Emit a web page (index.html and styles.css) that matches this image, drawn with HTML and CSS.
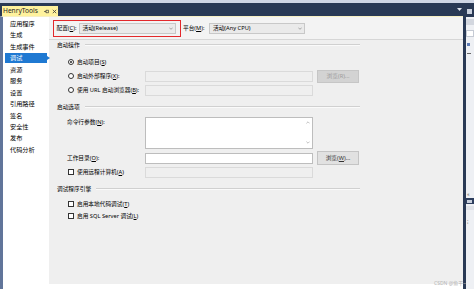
FILE: index.html
```html
<!DOCTYPE html>
<html>
<head>
<meta charset="utf-8">
<title>HenryTools - 调试</title>
<link rel="stylesheet" href="styles.css">
</head>
<body>
<div class="top-strip"></div>
<div class="frame">
  <div class="doc-well">
    <div class="tab-bar">
      <div class="tab">
        <span class="tab-title">HenryTools</span>
        <svg class="tab-pin" width="5" height="5" viewBox="0 0 5 5">
          <path d="M0 2.5H2M2 1V4M2 1.3H4.6V3.7H2" fill="none" stroke="#3b3b3b" stroke-width="0.7"/>
        </svg>
        <svg class="tab-close" width="5" height="5" viewBox="0 0 5 5">
          <path d="M0.8 0.8L4.2 4.2M4.2 0.8L0.8 4.2" stroke="#3b3b3b" stroke-width="0.8"/>
        </svg>
      </div>
      <svg class="tab-menu" width="5" height="3" viewBox="0 0 5 3">
        <path d="M0 0H5L2.5 3Z" fill="#dfe4ee"/>
      </svg>
    </div>
    <div class="doc">
      <ul class="nav">
        <li>应用程序</li>
        <li>生成</li>
        <li>生成事件</li>
        <li class="active">调试</li>
        <li>资源</li>
        <li>服务</li>
        <li>设置</li>
        <li>引用路径</li>
        <li>签名</li>
        <li>安全性</li>
        <li>发布</li>
        <li>代码分析</li>
      </ul>
      <div class="page">
        <div class="config-bar">
          <div class="config-box">
            <span class="config-label">配置(<u>C</u>):</span>
            <div class="combo combo-config">
              <span>活动(Release)</span>
              <svg width="4" height="3" viewBox="0 0 4 3"><path d="M0.3 0.6L2 2.3L3.7 0.6" fill="none" stroke="#777" stroke-width="0.6"/></svg>
            </div>
          </div>
          <span class="platform-label">平台(<u>M</u>):</span>
          <div class="combo combo-platform">
            <span>活动(Any CPU)</span>
            <svg width="4" height="3" viewBox="0 0 4 3"><path d="M0.3 0.6L2 2.3L3.7 0.6" fill="none" stroke="#777" stroke-width="0.6"/></svg>
          </div>
        </div>

        <div class="page-body">
          <section class="group">
            <div class="group-title"><span>启动操作</span></div>
            <div class="row first">
              <div class="lbl"><span class="radio checked"></span>启动项目(<u>S</u>)</div>
            </div>
            <div class="row">
              <div class="lbl"><span class="radio"></span>启动外部程序(<u>X</u>):</div>
              <div class="field disabled"></div>
              <div class="btn disabled">浏览(R)...</div>
            </div>
            <div class="row">
              <div class="lbl"><span class="radio"></span>使用 URL 启动浏览器(<u>B</u>):</div>
              <div class="field disabled"></div>
            </div>
          </section>

          <section class="group">
            <div class="group-title"><span>启动选项</span></div>
            <div class="row text-row first tall">
              <div class="lbl top">命令行参数(<u>N</u>):</div>
              <div class="field textarea">
                <svg width="4" height="3" viewBox="0 0 4 3"><path d="M0.4 2.4L2 0.8L3.6 2.4" fill="none" stroke="#999" stroke-width="0.6"/></svg>
                <svg width="4" height="3" viewBox="0 0 4 3"><path d="M0.4 0.6L2 2.2L3.6 0.6" fill="none" stroke="#999" stroke-width="0.6"/></svg>
              </div>
            </div>
            <div class="row text-row workdir">
              <div class="lbl">工作目录(<u>O</u>):</div>
              <div class="field"></div>
              <div class="btn">浏览(<u>W</u>)...</div>
            </div>
            <div class="row">
              <div class="lbl"><span class="check"></span>使用远程计算机(<u>A</u>)</div>
              <div class="field disabled"></div>
            </div>
          </section>

          <section class="group">
            <div class="group-title"><span>调试程序引擎</span></div>
            <div class="row short first">
              <div class="lbl wide"><span class="check"></span>启用本地代码调试(<u>T</u>)</div>
            </div>
            <div class="row short">
              <div class="lbl wide"><span class="check"></span>启用 SQL Server 调试(<u>L</u>)</div>
            </div>
          </section>
        </div>
      </div>
    </div>
  </div>
  <div class="splitter"></div>
  <div class="tool-panel">
    <div class="tp-head"><span class="tp-icon"></span></div>
    <div class="tp-body">
      <div class="tp-bar"></div>
      <div class="tp-search"></div>
      <div class="tp-node"></div>
      <div class="tp-dash"></div>
      <div class="tp-fill"></div>
      <div class="tp-chev">«</div>
      <div class="tp-head2"><span class="tp-icon small"></span></div>
      <div class="tp-bar2"></div>
      <div class="tp-dots">⁝</div>
    </div>
  </div>
</div>
<div class="watermark">CSDN @鱼干~</div>
</body>
</html>
```

FILE: styles.css
```css
* {
   box-sizing: border-box;
}
body {
   margin: 0;
   width: 474px;
   height: 289px;
   overflow: hidden;
   position: relative;
   background: #293955;
   font-family: "Noto Sans", "Noto Sans CJK SC", sans-serif;
   font-size: 5.7px;
   line-height: 8px;
   color: #000;
}
u {
   text-decoration: underline;
}
.top-strip {
   height: 3px;
   background: #cfd6e5;
}
.frame {
   display: flex;
   height: 286px;
}
.doc-well {
   flex: 1;
   display: flex;
   flex-direction: column;
}

/* tab strip */
.tab-bar {
   height: 13px;
   display: flex;
   align-items: flex-end;
   padding-left: 2px;
   background: #293955;
}
.tab {
   width: 56px;
   height: 10px;
   display: flex;
   align-items: center;
   padding-left: 1px;
   background: #fff29d;
   font-size: 6.6px;
   color: #1e1e1e;
}
.tab-title {
   margin-right: 6px;
}
.tab-pin {
   margin-right: 3px;
}
.tab-menu {
   margin-left: auto;
   margin-right: 1px;
   align-self: center;
}

/* document */
.doc {
   flex: 1;
   display: flex;
   border-left: 3px solid #61759a;
   border-top: 1px solid #f6efc4;
   background: #fff;
}
.nav {
   width: 46px;
   margin: 0;
   padding: 2px 0 0 0;
   list-style: none;
   background: #fff;
   font-size: 6.2px;
}
.nav li {
   height: 10px;
   line-height: 10px;
   margin-bottom: 1.45px;
   padding-left: 7px;
}
.nav li.active {
   position: relative;
   width: 42px;
   margin-left: 2px;
   padding-left: 5px;
   background: #1f79d2;
   color: #fff;
}
.nav li.active::after {
   content: "";
   position: absolute;
   right: -3px;
   top: 3px;
   border-left: 3px solid #1f79d2;
   border-top: 2.5px solid transparent;
   border-bottom: 2.5px solid transparent;
}
.page {
   flex: 1;
   display: flex;
   flex-direction: column;
   background: #fff;
}

/* configuration bar */
.config-bar {
   height: 23px;
   display: flex;
   align-items: center;
   padding-left: 4px;
   background: #f3f3f3;
   border-bottom: 1px solid #d6d6d6;
}
.config-box {
   height: 17px;
   display: flex;
   align-items: center;
   padding: 0 4.5px 0 2.5px;
   border: 1.5px solid #e3282b;
}
.config-label {
   width: 22px;
}
.platform-label {
   width: 26px;
   margin-left: 2px;
}
.combo {
   height: 11px;
   display: flex;
   align-items: center;
   justify-content: space-between;
   padding: 0 2px 0 3px;
   background: #eaeaea;
   border: 1px solid #c8c8c8;
}
.combo-config {
   width: 97px;
}
.combo-platform {
   width: 96px;
}

/* property page */
.page-body {
   flex: 1;
   margin-bottom: 5px;
   padding-left: 8px;
   background: #efefef;
}
.group {
   width: 303px;
   margin-top: 5px;
}
.group:first-child {
   margin-top: 0;
}
.group-title {
   height: 9px;
   display: flex;
   align-items: center;
}
.group-title::after {
   content: "";
   flex: 1;
   margin-left: 5px;
   border-top: 1px solid #d0d0d0;
   border-bottom: 1px solid #fafafa;
}
.row {
   height: 14px;
   display: flex;
   align-items: center;
   padding-left: 11px;
}
.row.first {
   margin-top: 6px;
}
.row.short {
   height: 12px;
}
.group .row.short.first {
   margin-top: 5px;
}
.row.text-row {
   padding-left: 10px;
}
.row.tall {
   height: 32px;
   align-items: stretch;
}
.row.workdir {
   margin-top: 2px;
}
.lbl {
   width: 77px;
   display: flex;
   align-items: center;
   white-space: nowrap;
}
.text-row .lbl {
   width: 78px;
}
.lbl.top {
   align-items: flex-start;
   padding-top: 1px;
}
.lbl.wide {
   width: auto;
}
.radio {
   width: 6px;
   height: 6px;
   margin-right: 3px;
   border: 0.8px solid #333;
   border-radius: 50%;
   background: #fff;
   display: flex;
   align-items: center;
   justify-content: center;
}
.radio.checked::after {
   content: "";
   width: 2.6px;
   height: 2.6px;
   border-radius: 50%;
   background: #222;
}
.check {
   width: 6px;
   height: 6px;
   margin-right: 3px;
   border: 0.8px solid #333;
   background: #fff;
}
.field {
   width: 168px;
   height: 11px;
   background: #fff;
   border: 1px solid #bdbdbd;
}
.field.disabled {
   background: #efefef;
   border-color: #dadada;
}
.field.textarea {
   height: 32px;
   display: flex;
   flex-direction: column;
   align-items: flex-end;
   justify-content: space-between;
   padding: 3px 2px 4px 0;
}
.btn {
   width: 42px;
   height: 14px;
   margin-left: 4px;
   display: flex;
   align-items: center;
   justify-content: center;
   background: #e1e1e1;
   border: 1px solid #c4c4c4;
   color: #333;
}
.btn.disabled {
   height: 13px;
   background: #d3d3d3;
   border-color: #c6c6c6;
   color: #9c9c9c;
}

/* right tool window strip */
.splitter {
   width: 3px;
   background: #293955;
}
.tool-panel {
   width: 8px;
   display: flex;
   flex-direction: column;
}
.tp-head {
   height: 14px;
   padding: 6px 0 0 1px;
   background: #293955;
}
.tp-icon {
   display: block;
   width: 5px;
   height: 5px;
   background: #c9d0dd;
}
.tp-icon.small {
   height: 3px;
}
.tp-body {
   flex: 1;
   display: flex;
   flex-direction: column;
   background: #eef0f4;
   font-size: 5px;
   line-height: 6px;
   color: #555;
}
.tp-bar {
   height: 6px;
   margin-top: 2px;
   background: #d3d7df;
}
.tp-search {
   height: 7px;
   margin-top: 5px;
   background: #fff;
   border: 1px solid #c5cad4;
}
.tp-node {
   width: 3px;
   height: 3px;
   margin: 6px 0 0 1px;
   background: #5d7bb5;
}
.tp-dash {
   width: 4px;
   height: 1px;
   margin: 7px 0 0 1px;
   background: #666;
}
.tp-fill {
   flex: 1;
}
.tp-chev {
   padding-left: 1px;
}
.tp-head2 {
   height: 6px;
   margin-top: 1px;
   padding: 1.5px 0 0 1px;
   background: #2e3f5e;
}
.tp-bar2 {
   height: 4px;
   margin-top: 2px;
   background: #dfe2e8;
}
.tp-dots {
   margin: 9px 0 64px 1px;
}

.watermark {
   position: absolute;
   right: 8px;
   bottom: 3px;
   font-size: 5px;
   line-height: 6px;
   color: #b4b4b4;
}
```
